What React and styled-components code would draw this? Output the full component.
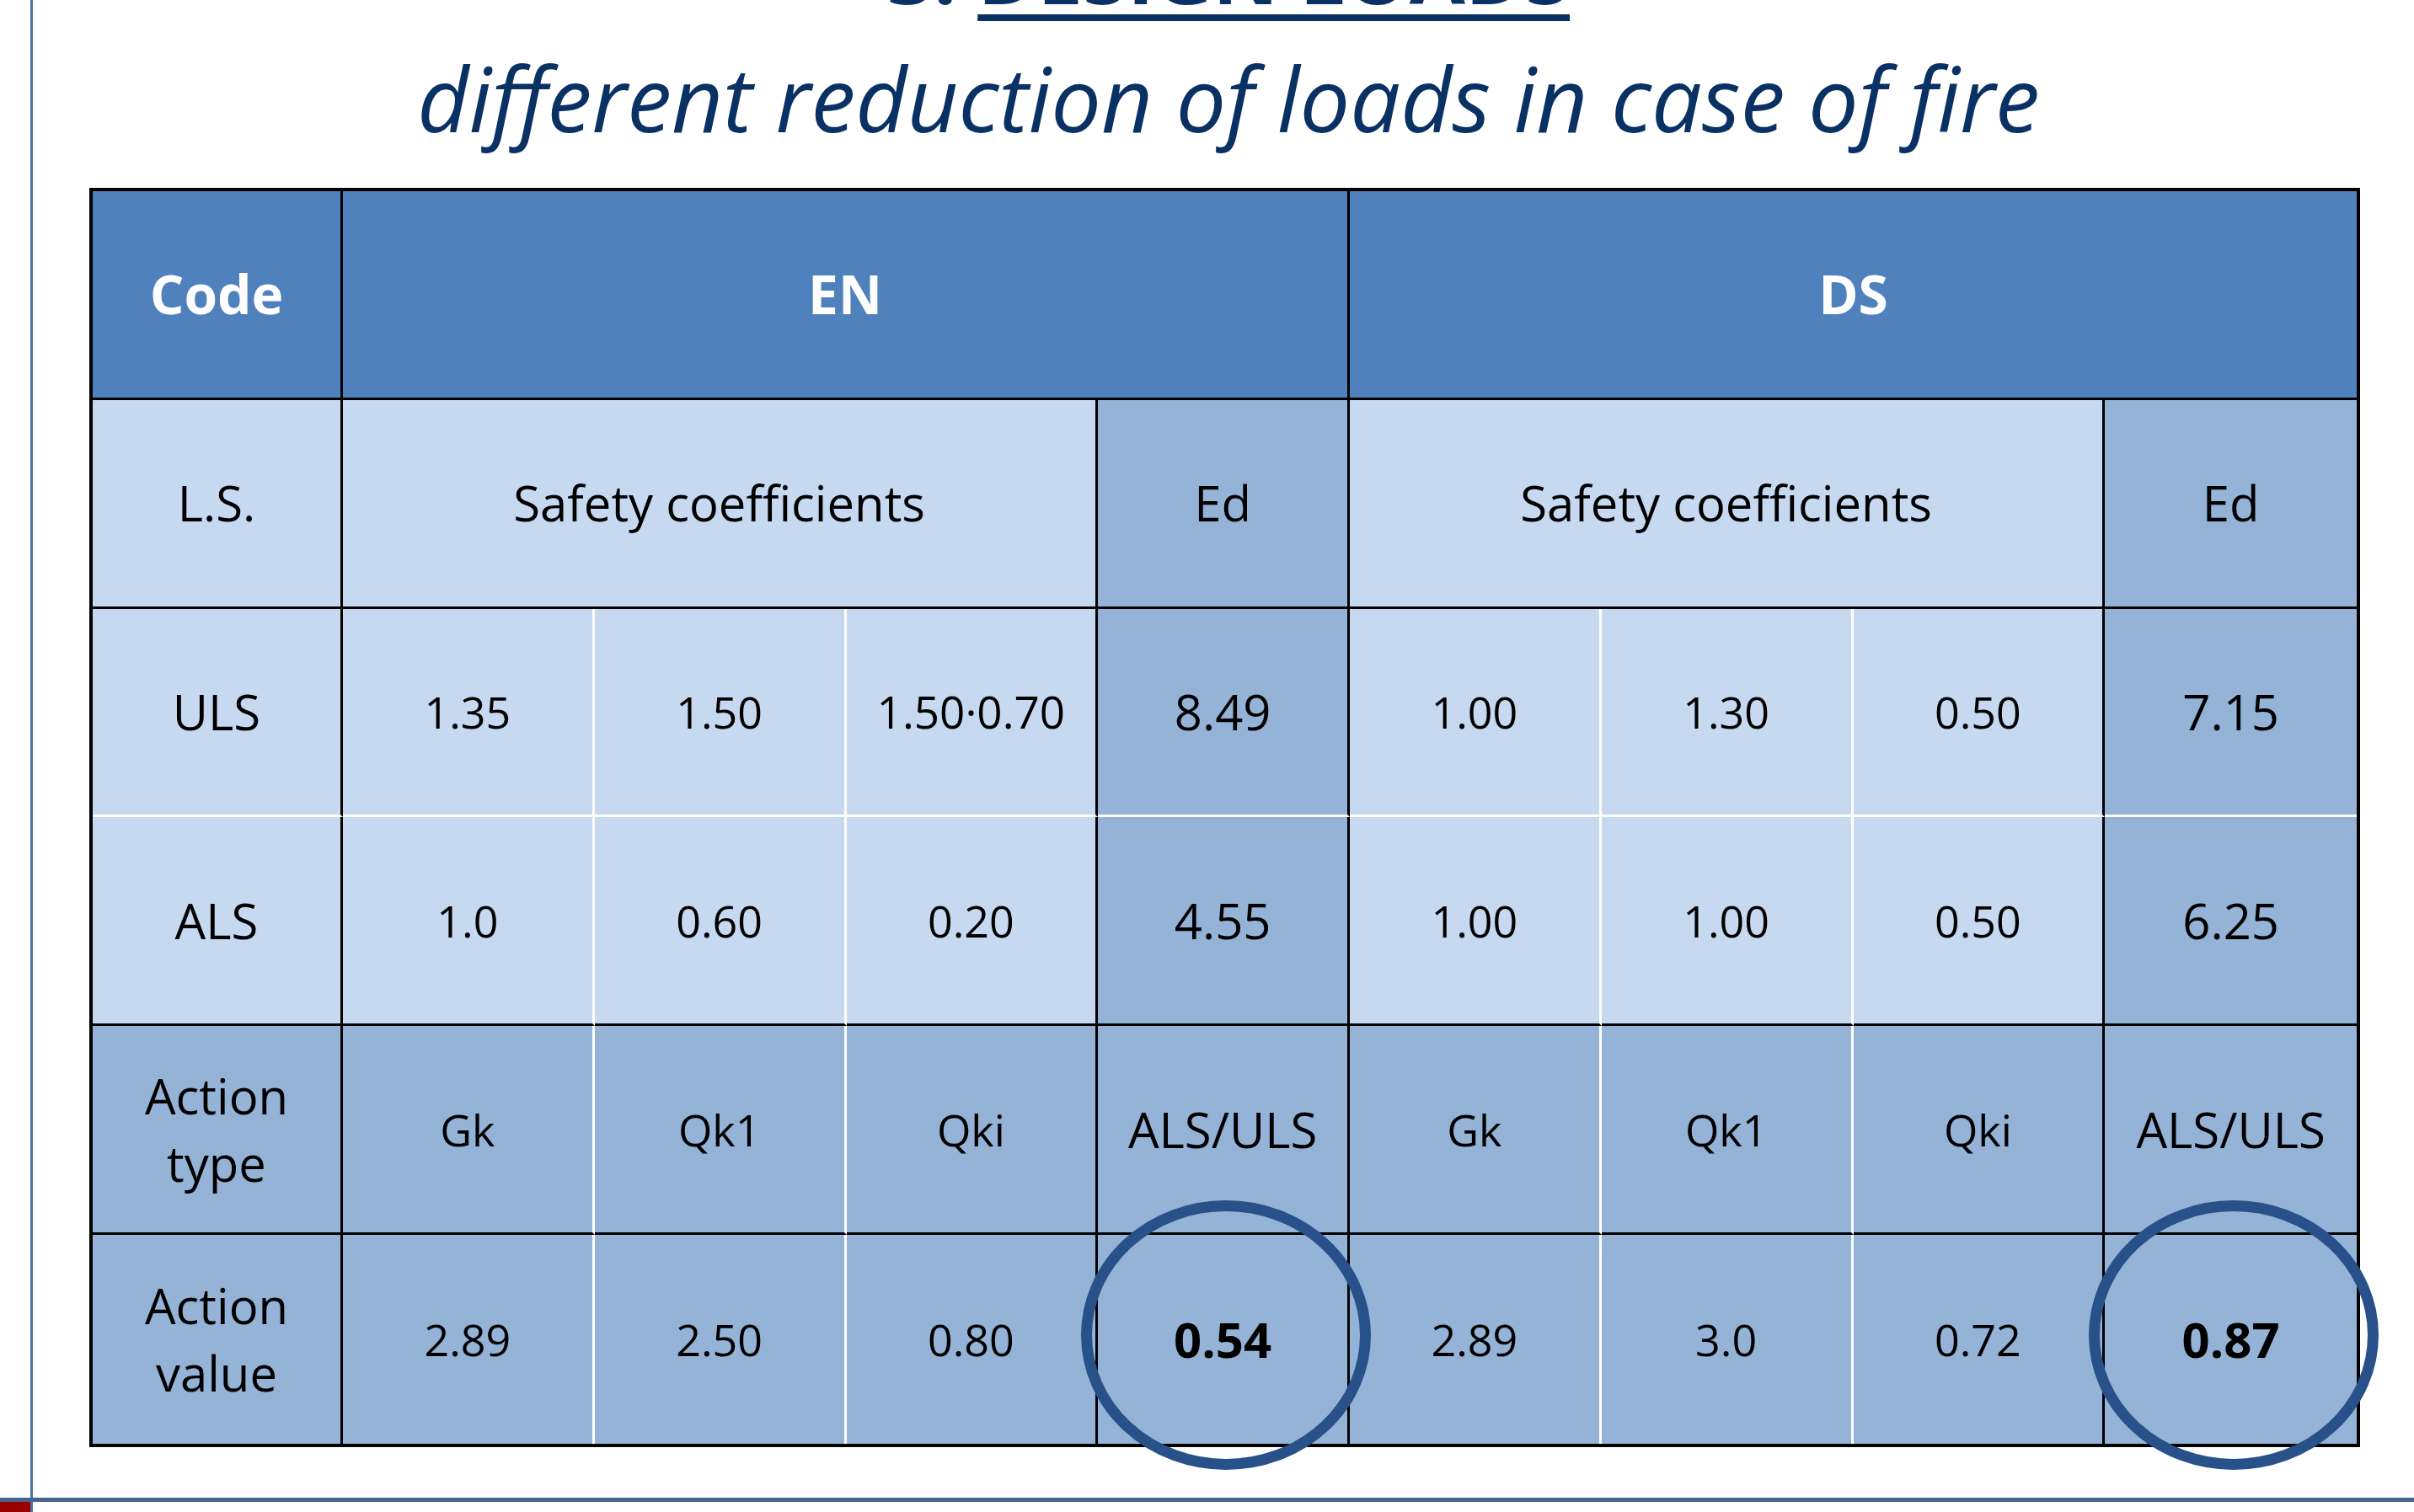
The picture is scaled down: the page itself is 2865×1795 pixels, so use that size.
import React from "react";
import styled, { createGlobalStyle } from "styled-components";

const HEAD = "#4f81bd";
const LIGHT = "#c6d9f1";
const MID = "#95b3d7";
const INK = "#0a3164";

const GlobalStyle = createGlobalStyle`
  html, body {
    margin: 0;
    padding: 0;
    background: #fff;
  }
  body {
    font-family: "Open Sans", "Liberation Sans", sans-serif;
    color: #000;
  }
  #root {
    width: 2865px;
    height: 1795px;
    overflow: hidden;
  }
`;

// one row = list of cells; kind decides font
const makeRow = (cells, bottom, bg) =>
  cells.map((c, i) => {
    const cell = typeof c === "string" ? { t: c } : c;
    const last = i === cells.length - 1;
    const white = [1, 2, 5, 6].includes(i);
    return {
      kind: "num",
      bg,
      ...cell,
      r: last ? null : white ? "#fff" : "#000",
      b: bottom,
    };
  });

const rows = [
  [
    { t: "Code", kind: "head", bg: HEAD, r: "#000", b: "#000" },
    { t: "EN", kind: "head", bg: HEAD, span: 4, r: "#000", b: "#000" },
    { t: "DS", kind: "head", bg: HEAD, span: 4, r: null, b: "#000" },
  ],
  [
    { t: "L.S.", kind: "label", bg: LIGHT, r: "#000", b: "#000" },
    { t: "Safety coefficients", kind: "label", bg: LIGHT, span: 3, r: "#000", b: "#000" },
    { t: "Ed", kind: "label", bg: MID, r: "#000", b: "#000" },
    { t: "Safety coefficients", kind: "label", bg: LIGHT, span: 3, r: "#000", b: "#000" },
    { t: "Ed", kind: "label", bg: MID, r: null, b: "#000" },
  ],
  makeRow(
    [
      { t: "ULS", kind: "label" },
      "1.35",
      "1.50",
      { t: "1.50·0.70", kind: "small" },
      { t: "8.49", kind: "label", bg: MID },
      "1.00",
      "1.30",
      "0.50",
      { t: "7.15", kind: "label", bg: MID },
    ],
    "#fff",
    LIGHT
  ),
  makeRow(
    [
      { t: "ALS", kind: "label" },
      "1.0",
      "0.60",
      "0.20",
      { t: "4.55", kind: "label", bg: MID },
      "1.00",
      "1.00",
      "0.50",
      { t: "6.25", kind: "label", bg: MID },
    ],
    "#000",
    LIGHT
  ),
  makeRow(
    [
      { t: "Action type", kind: "label", wrap: true },
      "Gk",
      "Qk1",
      "Qki",
      { t: "ALS/ULS", kind: "label" },
      "Gk",
      "Qk1",
      "Qki",
      { t: "ALS/ULS", kind: "label" },
    ],
    "#000",
    MID
  ),
  makeRow(
    [
      { t: "Action value", kind: "label", wrap: true },
      "2.89",
      "2.50",
      "0.80",
      { t: "0.54", kind: "bold" },
      "2.89",
      "3.0",
      "0.72",
      { t: "0.87", kind: "bold" },
    ],
    null,
    MID
  ),
];

const fonts = {
  head: { size: 64, weight: 700, color: "#fff" },
  label: { size: 58, weight: 400, color: "#000" },
  num: { size: 52, weight: 400, color: "#000" },
  small: { size: 53, weight: 400, color: "#000" },
  bold: { size: 58, weight: 700, color: "#000" },
};

const App = () => {
  return (
    <Page>
      <GlobalStyle />
      <Main>
        <Gutter />
        <VRule />
        <Content>
          <Heading>
            3. <Under>DESIGN LOADS</Under>
          </Heading>
          <Subtitle>different reduction of loads in case of fire</Subtitle>
          <TableWrap>
            <Table>
              {rows.map((row, ri) =>
                row.map((c, ci) => {
                  const f = fonts[c.kind];
                  return (
                    <Cell
                      key={`${ri}-${ci}`}
                      $span={c.span}
                      $bg={c.bg}
                      $r={c.r}
                      $b={c.b}
                      $size={f.size}
                      $weight={f.weight}
                      $color={f.color}
                    >
                      <CellText $wrap={c.wrap}>{c.t}</CellText>
                    </Cell>
                  );
                })
              )}
            </Table>
            <Ring $left={1177} viewBox="0 0 344 320">
              <ellipse cx="172" cy="160" rx="165.5" ry="153.5" fill="none" stroke="#285189" strokeWidth="13" />
            </Ring>
            <Ring $left={2373} viewBox="0 0 344 320">
              <ellipse cx="172" cy="160" rx="165.5" ry="153.5" fill="none" stroke="#285189" strokeWidth="13" />
            </Ring>
          </TableWrap>
        </Content>
      </Main>
      <HRule />
      <Footer>
        <RedBlock />
        <VRule />
      </Footer>
    </Page>
  );
};

export default App;

const Page = styled.div`
  width: 2865px;
  height: 1795px;
  display: flex;
  flex-direction: column;
  background: #fff;
  overflow: hidden;
`;

const Main = styled.div`
  display: flex;
  height: 1778px;
  flex: none;
`;

const Gutter = styled.div`
  width: 36px;
  flex: none;
`;

const VRule = styled.div`
  width: 3px;
  flex: none;
  background: #4d72a6;
`;

const Content = styled.div`
  flex: 1;
  display: flex;
  flex-direction: column;
  padding-left: 12px;
  min-width: 0;
`;

const Heading = styled.h1`
  margin: -80px 0 0;
  font-family: "Open Sans", sans-serif;
  font-size: 96px;
  line-height: 96px;
  font-weight: 700;
  color: ${INK};
  text-align: center;
  white-space: nowrap;
`;

const Under = styled.span`
  text-decoration: underline;
  text-decoration-thickness: 8px;
  text-underline-offset: 12px;
`;

const Subtitle = styled.h2`
  margin: 47px 0 0;
  font-family: "Open Sans", sans-serif;
  font-style: italic;
  font-weight: 400;
  font-size: 106px;
  line-height: 106px;
  color: ${INK};
  text-align: center;
  white-space: nowrap;
`;

const TableWrap = styled.div`
  position: relative;
  margin: 54px 0 0 55px;
  width: 2695px;
`;

const Table = styled.div`
  box-sizing: border-box;
  width: 2695px;
  height: 1495px;
  border: 4px solid #000;
  display: grid;
  grid-template-columns: 297px repeat(8, 1fr);
  grid-template-rows: repeat(6, 1fr);
`;

const Cell = styled.div`
  box-sizing: border-box;
  grid-column: span ${(p) => p.$span || 1};
  background: ${(p) => p.$bg};
  border-right: ${(p) => (p.$r ? `3px solid ${p.$r}` : "none")};
  border-bottom: ${(p) => (p.$b ? `3px solid ${p.$b}` : "none")};
  display: flex;
  align-items: center;
  justify-content: center;
  text-align: center;
  font-family: "Open Sans", sans-serif;
  font-size: ${(p) => p.$size}px;
  font-weight: ${(p) => p.$weight};
  color: ${(p) => p.$color};
  line-height: 80px;
  min-width: 0;
`;

const CellText = styled.span`
  display: block;
  max-width: ${(p) => (p.$wrap ? "230px" : "none")};
  white-space: ${(p) => (p.$wrap ? "normal" : "nowrap")};
`;

const Ring = styled.svg`
  position: absolute;
  top: 1202px;
  left: ${(p) => p.$left}px;
  width: 344px;
  height: 320px;
  overflow: visible;
  pointer-events: none;
`;

const HRule = styled.div`
  height: 5px;
  flex: none;
  background: #46658b;
`;

const Footer = styled.div`
  display: flex;
  height: 12px;
  flex: none;
`;

const RedBlock = styled.div`
  width: 36px;
  flex: none;
  background: #9a0000;
`;
